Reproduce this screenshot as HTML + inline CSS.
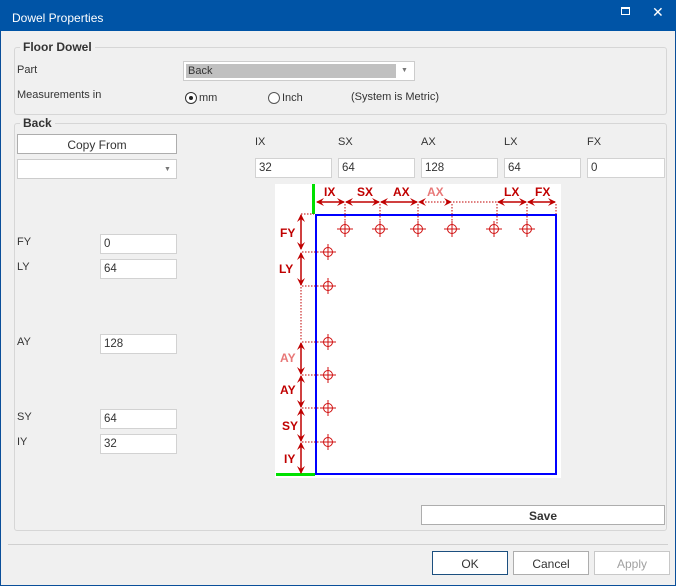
<!DOCTYPE html>
<html><head><meta charset="utf-8"><style>
*{box-sizing:border-box;margin:0;padding:0}
body{width:676px;height:586px;overflow:hidden;background:#f0f0f0;font-family:"Liberation Sans",sans-serif;font-size:11px;color:#222;position:relative}
.a{position:absolute}
.win{position:absolute;left:0;top:0;width:676px;height:586px;border:1px solid #0a4f9a;border-top:none}
.title{left:0;top:0;width:676px;height:31px;background:#0054a6;color:#fff;font-size:12px}
.gb{border:1px solid #d6d6d6;border-radius:3px}
.lg{background:#f0f0f0;font-weight:bold;font-size:12px;padding:0 3px;color:#333}
.tb{background:#fff;border:1px solid #d2d2d2;height:20px;padding:3px 0 0 3px;font-size:11.5px;color:#333}
.btn{background:#fff;border:1px solid #adadad;text-align:center;font-size:12px;color:#333}
.lbl{font-size:11px;color:#333}
</style></head><body>
<div class="win"></div>
<div class="a title"><span class="a" style="left:12px;top:11px">Dowel Properties</span>
<div class="a" style="left:621px;top:7px;width:9px;height:8px;border:1px solid #fff;border-top-width:2px"></div>
<span class="a" style="left:652px;top:4px;font-size:14px">✕</span></div>

<div class="a gb" style="left:14px;top:47px;width:653px;height:68px"></div>
<div class="a lg" style="left:20px;top:40px">Floor Dowel</div>
<div class="a lbl" style="left:17px;top:64px">Part</div>
<div class="a" style="left:183px;top:61px;width:232px;height:20px;border:1px solid #ccc;background:#fff"><div class="a" style="left:2px;top:2px;width:210px;height:14px;background:#c0c0c0"></div><span class="a lbl" style="left:4px;top:3px">Back</span><span class="a" style="left:217px;top:5px;font-size:7px;color:#777">▼</span></div>
<div class="a lbl" style="left:17px;top:89px">Measurements in</div>
<div class="a" style="left:185px;top:92px;width:12px;height:12px;border:1px solid #333;border-radius:50%;background:#fff"><div class="a" style="left:3px;top:3px;width:4px;height:4px;border-radius:50%;background:#222"></div></div>
<div class="a lbl" style="left:199px;top:92px">mm</div>
<div class="a" style="left:268px;top:92px;width:12px;height:12px;border:1px solid #555;border-radius:50%;background:#fff"></div>
<div class="a lbl" style="left:282px;top:92px">Inch</div>
<div class="a lbl" style="left:351px;top:91px">(System is Metric)</div>

<div class="a gb" style="left:14px;top:123px;width:653px;height:408px"></div>
<div class="a lg" style="left:20px;top:116px">Back</div>
<div class="a btn" style="left:17px;top:134px;width:160px;height:20px;padding-top:3px">Copy From</div>
<div class="a" style="left:17px;top:159px;width:160px;height:20px;border:1px solid #ccc;background:#fff"><span class="a" style="left:146px;top:6px;font-size:7px;color:#777">▼</span></div>

<div class="a lbl" style="left:255px;top:136px">IX</div><div class="a tb" style="left:255px;top:158px;width:77px">32</div>
<div class="a lbl" style="left:338px;top:136px">SX</div><div class="a tb" style="left:338px;top:158px;width:77px">64</div>
<div class="a lbl" style="left:421px;top:136px">AX</div><div class="a tb" style="left:421px;top:158px;width:77px">128</div>
<div class="a lbl" style="left:504px;top:136px">LX</div><div class="a tb" style="left:504px;top:158px;width:77px">64</div>
<div class="a lbl" style="left:587px;top:136px">FX</div><div class="a tb" style="left:587px;top:158px;width:78px">0</div>

<div class="a lbl" style="left:17px;top:236px">FY</div><div class="a tb" style="left:100px;top:234px;width:77px">0</div>
<div class="a lbl" style="left:17px;top:261px">LY</div><div class="a tb" style="left:100px;top:259px;width:77px">64</div>
<div class="a lbl" style="left:17px;top:336px">AY</div><div class="a tb" style="left:100px;top:334px;width:77px">128</div>
<div class="a lbl" style="left:17px;top:411px">SY</div><div class="a tb" style="left:100px;top:409px;width:77px">64</div>
<div class="a lbl" style="left:17px;top:436px">IY</div><div class="a tb" style="left:100px;top:434px;width:77px">32</div>

<svg class="a" style="left:0;top:0" width="676" height="586" font-family="Liberation Sans,sans-serif" font-weight="bold" font-size="12">
<defs><marker id="m" markerWidth="8" markerHeight="8" refX="7" refY="4" orient="auto-start-reverse" markerUnits="userSpaceOnUse"><path d="M0,0 L8,4 L0,8 L3,4Z" fill="#c00000"/></marker>
<g id="h"><circle cx="0" cy="0" r="4.5"/><line x1="-8" y1="0" x2="8" y2="0"/><line x1="0" y1="-8" x2="0" y2="8"/></g></defs>
<rect x="275" y="184" width="286" height="294" fill="#fff"/>
<rect x="316" y="215" width="240" height="259" fill="none" stroke="#0000ff" stroke-width="2"/>
<rect x="312" y="184" width="3" height="30" fill="#00e000"/>
<rect x="276" y="473" width="39" height="3" fill="#00e000"/>
<g stroke="#c00000" stroke-width="1.5" fill="none">
<line x1="317" y1="202" x2="344" y2="202" marker-start="url(#m)" marker-end="url(#m)"/>
<line x1="346" y1="202" x2="379" y2="202" marker-start="url(#m)" marker-end="url(#m)"/>
<line x1="381" y1="202" x2="417" y2="202" marker-start="url(#m)" marker-end="url(#m)"/>
<line x1="498" y1="202" x2="526" y2="202" marker-start="url(#m)" marker-end="url(#m)"/>
<line x1="528" y1="202" x2="555" y2="202" marker-start="url(#m)" marker-end="url(#m)"/>
<line x1="301" y1="215" x2="301" y2="249" marker-start="url(#m)" marker-end="url(#m)"/>
<line x1="301" y1="253" x2="301" y2="285" marker-start="url(#m)" marker-end="url(#m)"/>
<line x1="301" y1="343" x2="301" y2="374" marker-start="url(#m)" marker-end="url(#m)"/>
<line x1="301" y1="376" x2="301" y2="407" marker-start="url(#m)" marker-end="url(#m)"/>
<line x1="301" y1="409" x2="301" y2="441" marker-start="url(#m)" marker-end="url(#m)"/>
<line x1="301" y1="443" x2="301" y2="473" marker-start="url(#m)" marker-end="url(#m)"/>
</g>
<g stroke="#c00000" stroke-width="1" stroke-dasharray="1.5,1.5" fill="none">
<line x1="419" y1="202" x2="451" y2="202" marker-start="url(#m)" marker-end="url(#m)"/>
<line x1="453" y1="202" x2="497" y2="202"/>
<line x1="556" y1="204" x2="556" y2="214"/>
<line x1="345" y1="204" x2="345" y2="224"/><line x1="380" y1="204" x2="380" y2="224"/><line x1="418" y1="204" x2="418" y2="224"/><line x1="452" y1="204" x2="452" y2="224"/><line x1="497" y1="204" x2="497" y2="224"/><line x1="527" y1="204" x2="527" y2="224"/>
<line x1="301" y1="214" x2="314" y2="214"/>
<line x1="301" y1="287" x2="301" y2="341"/>
<line x1="302" y1="252" x2="323" y2="252"/><line x1="302" y1="286" x2="323" y2="286"/><line x1="302" y1="342" x2="323" y2="342"/><line x1="302" y1="375" x2="323" y2="375"/><line x1="302" y1="408" x2="323" y2="408"/><line x1="302" y1="442" x2="323" y2="442"/>
</g>
<g stroke="#d01010" stroke-width="1" fill="none">
<use href="#h" x="345" y="229"/><use href="#h" x="380" y="229"/><use href="#h" x="418" y="229"/><use href="#h" x="452" y="229"/><use href="#h" x="494" y="229"/><use href="#h" x="527" y="229"/>
<use href="#h" x="328" y="252"/><use href="#h" x="328" y="286"/><use href="#h" x="328" y="342"/><use href="#h" x="328" y="375"/><use href="#h" x="328" y="408"/><use href="#h" x="328" y="442"/>
</g>
<g fill="#c00000">
<text x="324" y="196">IX</text><text x="357" y="196">SX</text><text x="393" y="196">AX</text><text fill="#e87878" x="427" y="196">AX</text><text x="504" y="196">LX</text><text x="535" y="196">FX</text>
<text x="280" y="237">FY</text><text x="279" y="273">LY</text><text fill="#e87878" x="280" y="362">AY</text><text x="280" y="394">AY</text><text x="282" y="430">SY</text><text x="284" y="463">IY</text>
</g>
</svg>

<div class="a btn" style="left:421px;top:505px;width:244px;height:20px;padding-top:3px;font-weight:bold">Save</div>
<div class="a" style="left:8px;top:544px;width:660px;height:1px;background:#d0d0d0"></div>
<div class="a btn" style="left:432px;top:551px;width:76px;height:24px;padding-top:5px;border-color:#1c4f7f">OK</div>
<div class="a btn" style="left:513px;top:551px;width:76px;height:24px;padding-top:5px">Cancel</div>
<div class="a btn" style="left:594px;top:551px;width:76px;height:24px;padding-top:5px;color:#a0a0a0;border-color:#c8c8c8">Apply</div>
</body></html>
